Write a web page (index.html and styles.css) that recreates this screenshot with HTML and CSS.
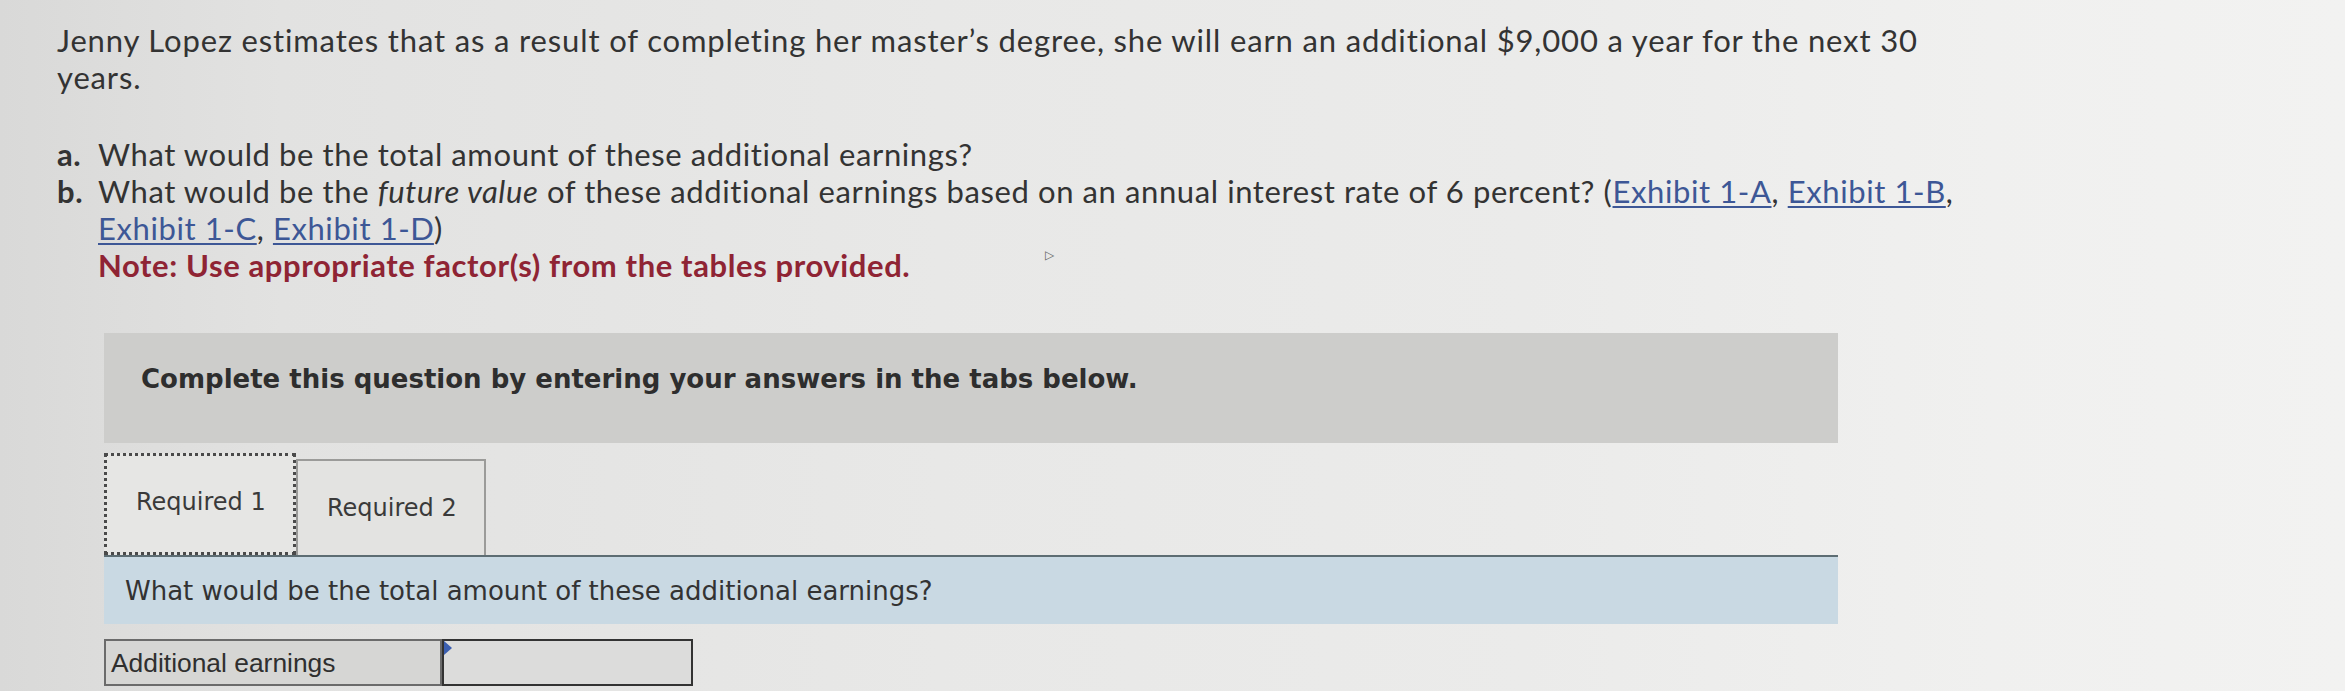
FILE: index.html
```html
<!DOCTYPE html>
<html lang="en">
<head>
<meta charset="utf-8">
<title>Jenny Lopez question</title>
<link rel="stylesheet" href="styles.css">
</head>
<body>
<main class="page">
  <p class="intro">Jenny Lopez estimates that as a result of completing her master’s degree, she will earn an additional $9,000 a year for the next 30 years.</p>

  <div class="parts">
    <div class="part">
      <span class="marker">a.</span>
      <div class="part-text">What would be the total amount of these additional earnings?</div>
    </div>
    <div class="part">
      <span class="marker">b.</span>
      <div class="part-text">What would be the <em>future value</em> of these additional earnings based on an annual interest rate of 6 percent? (<a href="#">Exhibit 1-A</a>, <a href="#">Exhibit 1-B</a>,<br><a href="#">Exhibit 1-C</a>, <a href="#">Exhibit 1-D</a>)<br><strong class="note">Note: Use appropriate factor(s) from the tables provided.</strong></div>
    </div>
    <span class="cursor-mark">&#9655;</span>
  </div>

  <section class="question">
    <div class="banner">Complete this question by entering your answers in the tabs below.</div>

    <div class="tabs">
      <button class="tab tab-active">Required 1</button>
      <button class="tab">Required 2</button>
    </div>

    <div class="prompt">What would be the total amount of these additional earnings?</div>

    <div class="answer-row">
      <div class="answer-label">Additional earnings</div>
      <div class="answer-input"><span class="input-flag"></span></div>
    </div>
  </section>
</main>
</body>
</html>
```

FILE: styles.css
```css
html, body {
  margin: 0;
  padding: 0;
}

body {
  width: 2345px;
  height: 691px;
  overflow: hidden;
  background: linear-gradient(90deg, #d9d9d8 0%, #e2e2e1 12%, #e8e8e7 40%, #ebebea 65%, #f0f0ef 85%, #f2f2f1 100%);
  color: #333333;
  font-family: "Lato", "Noto Sans", sans-serif;
}

.page {
  padding: 22px 0 0 57px;
}

.intro {
  margin: 0;
  width: 1895px;
  font-size: 31px;
  line-height: 37px;
  letter-spacing: 0.85px;
}

.parts {
  position: relative;
  margin-top: 40px;
  font-size: 31px;
  line-height: 37px;
  letter-spacing: 0.6px;
}

.part {
  display: flex;
}

.marker {
  width: 41px;
  flex: none;
  font-weight: 700;
}

.part-text em {
  font-style: italic;
}

.part-text a {
  color: #3d5796;
  text-decoration: underline;
  text-decoration-thickness: 2px;
  text-underline-offset: 3px;
}

.note {
  color: #8f2434;
  font-weight: 700;
}

.cursor-mark {
  position: absolute;
  left: 988px;
  top: 113px;
  font-size: 12px;
  line-height: 12px;
  color: #666;
}

.question {
  margin-top: 49px;
  margin-left: 47px;
  width: 1734px;
  font-family: "DejaVu Sans", Verdana, sans-serif;
}

.banner {
  height: 110px;
  box-sizing: border-box;
  padding: 31px 0 0 37px;
  background: #cdcdcb;
  color: #2e2e2e;
  font-size: 26px;
  font-weight: 700;
  line-height: 30px;
}

.tabs {
  display: flex;
  align-items: flex-end;
  margin-top: 10px;
}

.tab {
  box-sizing: border-box;
  height: 96px;
  width: 190px;
  padding: 0 0 0 29px;
  text-align: left;
  background: #e3e3e1;
  border: 2px solid #9b9b99;
  border-bottom: none;
  color: #3a3a3a;
  font-family: "DejaVu Sans", Verdana, sans-serif;
  font-size: 24px;
  line-height: 28px;
}

.tab-active {
  width: 192px;
  height: 102px;
  padding-left: 29px;
  padding-bottom: 4px;
  background: #e6e6e4;
  border: 3px dotted #4a4a4a;
}

.prompt {
  height: 69px;
  box-sizing: border-box;
  padding: 20px 0 0 21px;
  background: #c9d9e3;
  border-top: 2px solid #5d6d73;
  color: #333;
  font-size: 26px;
  line-height: 28px;
}

.answer-row {
  display: flex;
  margin-top: 15px;
  height: 47px;
}

.answer-label {
  box-sizing: border-box;
  width: 338px;
  padding: 5px 0 0 5px;
  background: #d6d6d4;
  border: 2px solid #6b6b6b;
  color: #2f2f2f;
  font-family: "Liberation Sans", Arial, sans-serif;
  font-size: 26.4px;
  line-height: 34px;
}

.answer-input {
  position: relative;
  box-sizing: border-box;
  width: 251px;
  background: #dcdcdb;
  border: 2px solid #333;
}

.input-flag {
  position: absolute;
  left: 0;
  top: 0;
  width: 0;
  height: 0;
  border-top: 7px solid transparent;
  border-bottom: 7px solid transparent;
  border-left: 8px solid #3b5fb0;
}
```
